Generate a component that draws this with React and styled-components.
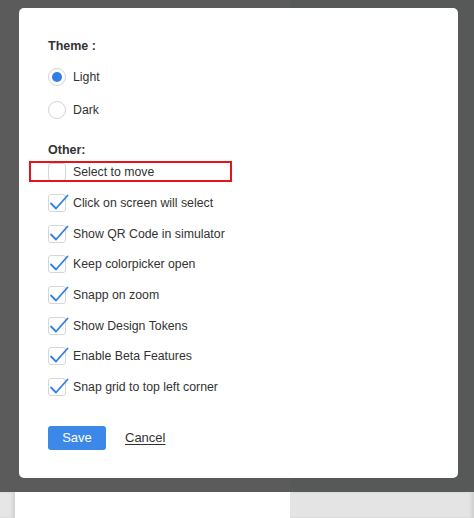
import React from 'react'
import styled, { createGlobalStyle } from 'styled-components'

const Global = createGlobalStyle`
  html, body { margin: 0; padding: 0; }
  body {
    font-family: "Liberation Sans", Arial, sans-serif;
    background: #fff;
    overflow: hidden;
  }
`

const Page = styled.div`
  width: 474px;
  height: 518px;
  display: flex;
  flex-direction: column;
`

const Backdrop = styled.div`
  height: 492px;
  background: linear-gradient(to right, #5b5b5b 0, #5b5b5b 290px, #565957 290px);
  padding: 8px 16px 0 19px;
  box-sizing: border-box;
`

const Modal = styled.div`
  width: 439px;
  height: 470px;
  background: #fff;
  border-radius: 5px;
  padding: 29px 0 0 29px;
  box-sizing: border-box;
  color: #333;
`

const Heading = styled.div`
  font-size: 12.5px;
  font-weight: 700;
  line-height: 18px;
  color: #333;
  margin: ${({ $top }) => $top || 0}px 0 ${({ $bottom }) => $bottom || 0}px;
`

const Row = styled.label`
  position: relative;
  display: flex;
  align-items: center;
  gap: 7px;
  height: ${({ $h }) => $h}px;
  font-size: 12.3px;
  color: #333;
`

const Radio = styled.span`
  width: 18px;
  height: 18px;
  box-sizing: border-box;
  border: 1px solid #d4d4d4;
  border-radius: 50%;
  display: flex;
  align-items: center;
  justify-content: center;
  background: #fff;

  &::after {
    content: '';
    display: ${({ $on }) => ($on ? 'block' : 'none')};
    width: 10px;
    height: 10px;
    border-radius: 50%;
    background: #2f7fe6;
  }
`

const Box = styled.span`
  position: relative;
  width: 18px;
  height: 18px;
  box-sizing: border-box;
  border: 1px solid #d6d6d6;
  border-radius: 3px;
  background: #fff;
  flex: none;

  svg {
    position: absolute;
    left: 0;
    top: -4px;
    overflow: visible;
  }
`

const Highlight = styled.span`
  position: absolute;
  left: -19px;
  top: 3.5px;
  width: 203px;
  height: 21.5px;
  box-sizing: border-box;
  border: 2.5px solid #e3141b;
  pointer-events: none;
`

const Actions = styled.div`
  display: flex;
  align-items: center;
  gap: 19px;
  margin-top: 23px;
`

const SaveButton = styled.button`
  width: 58px;
  height: 24px;
  border: none;
  border-radius: 3px;
  background: #3b88e8;
  color: #fff;
  font-family: inherit;
  font-size: 13px;
  padding: 0;
`

const CancelLink = styled.a`
  font-size: 13px;
  color: #333;
  text-decoration: underline;
  text-underline-offset: 2px;
`

const Bottom = styled.div`
  flex: 1;
  display: grid;
  grid-template-columns: 15px 275px 1fr;
`

const Strip = styled.div`
  background: ${({ $bg }) => $bg};
  box-shadow: ${({ $shadow }) => ($shadow ? 'inset -3px 0 3px rgba(0,0,0,0.08)' : 'none')};
`

const Check = () => (
  <svg width="20" height="20" viewBox="0 0 20 20">
    <path d="M2 12.5 L7 17.5 L18.5 4.5" fill="none" stroke="#2f7fe6" strokeWidth="1.8" strokeLinecap="round" strokeLinejoin="round" />
  </svg>
)

const options = [
  { label: 'Select to move', on: false, mark: true },
  { label: 'Click on screen will select', on: true },
  { label: 'Show QR Code in simulator', on: true },
  { label: 'Keep colorpicker open', on: true },
  { label: 'Snapp on zoom', on: true },
  { label: 'Show Design Tokens', on: true },
  { label: 'Enable Beta Features', on: true },
  { label: 'Snap grid to top left corner', on: true },
]

export default function App() {
  return (
    <Page>
      <Global />
      <Backdrop>
        <Modal>
          <Heading $bottom={5}>Theme :</Heading>
          <Row $h={33}><Radio $on />Light</Row>
          <Row $h={33}><Radio />Dark</Row>
          <Heading $top={15} $bottom={-2}>Other:</Heading>
          {options.map((o) => (
            <Row key={o.label} $h={30.7}>
              <Box>{o.on && <Check />}</Box>
              {o.label}
              {o.mark && <Highlight />}
            </Row>
          ))}
          <Actions>
            <SaveButton>Save</SaveButton>
            <CancelLink>Cancel</CancelLink>
          </Actions>
        </Modal>
      </Backdrop>
      <Bottom>
        <Strip $bg="#e6e6e6" $shadow />
        <Strip $bg="#ffffff" />
        <Strip $bg="#e4e4e4" $shadow />
      </Bottom>
    </Page>
  )
}
